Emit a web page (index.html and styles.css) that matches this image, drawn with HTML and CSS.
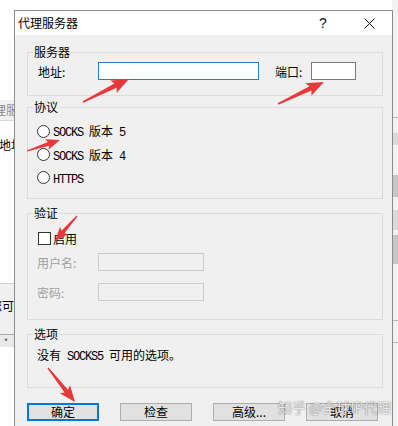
FILE: index.html
```html
<!DOCTYPE html>
<html lang="zh-CN">
<head>
    <meta charset="UTF-8">
    <meta name="viewport" content="width=device-width, initial-scale=1.0">
    <title>代理服务器</title>
    <link rel="stylesheet" href="styles.css">
</head>
<body>
    <!-- window behind the dialog -->
    <div class="bg-left">
        <div class="bg-gap-1"></div>
        <div class="bg-bar">理服</div>
        <div class="bg-text">地址</div>
        <div class="bg-gap-2"></div>
        <div class="bg-panel">您可</div>
        <div class="bg-strip">···</div>
    </div>
    <div class="bg-right">
        <div class="r-gap" style="height:117px"></div>
        <div class="r-line"></div>
        <div class="r-gap" style="height:15px"></div>
        <div class="r-block light" style="height:12px"></div>
        <div class="r-gap" style="height:30px"></div>
        <div class="r-block" style="height:22px"></div>
        <div class="r-gap" style="height:13px"></div>
        <div class="r-block light" style="height:20px"></div>
        <div class="r-gap" style="height:5px"></div>
        <div class="r-block" style="height:29px"></div>
        <div class="r-gap" style="height:56px"></div>
        <div class="r-line"></div>
        <div class="r-gap" style="height:21px"></div>
        <div class="r-line"></div>
    </div>

    <div class="dialog">
        <div class="titlebar">
            <span class="title">代理服务器</span>
            <span class="tb-btn help">?</span>
            <span class="tb-btn close">
                <svg width="11" height="11" viewBox="0 0 11 11"><path d="M0.5 0.5 L10.5 10.5 M10.5 0.5 L0.5 10.5" stroke="#111" stroke-width="1"/></svg>
            </span>
        </div>
        <div class="dlg-body">
            <fieldset class="group g-server">
                <legend>服务器</legend>
                <div class="row">
                    <span class="lbl">地址:</span>
                    <input class="field addr" type="text">
                    <span class="lbl port-lbl">端口:</span>
                    <input class="field port" type="text">
                </div>
            </fieldset>

            <fieldset class="group g-proto">
                <legend>协议</legend>
                <div class="opt"><span class="radio"></span><span class="opt-text"><span class="lat">SOCKS </span>版本<span class="lat"> 5</span></span></div>
                <div class="opt o2"><span class="radio"></span><span class="opt-text"><span class="lat">SOCKS </span>版本<span class="lat"> 4</span></span></div>
                <div class="opt o3"><span class="radio"></span><span class="opt-text"><span class="lat">HTTPS</span></span></div>
            </fieldset>

            <fieldset class="group g-auth">
                <legend>验证</legend>
                <div class="check-row"><span class="check"></span><span class="check-text">启用</span></div>
                <div class="row user-row">
                    <span class="lbl off">用户名:</span>
                    <input class="field off-field" type="text" disabled>
                </div>
                <div class="row pass-row">
                    <span class="lbl off">密码:</span>
                    <input class="field off-field" type="password" disabled>
                </div>
            </fieldset>

            <fieldset class="group g-opts">
                <legend>选项</legend>
                <div class="note">没有<span class="lat"> SOCKS5 </span>可用的选项。</div>
            </fieldset>

            <div class="buttons">
                <button class="btn default">确定</button>
                <button class="btn">检查</button>
                <button class="btn">高级...</button>
                <button class="btn">取消</button>
            </div>
        </div>
    </div>

    <!-- red annotation arrows -->
    <svg class="marks" width="398" height="426" viewBox="0 0 398 426">
        <g fill="#e8393a">
            <polygon transform="translate(83 102) rotate(-26.6)" points="0,-0.8 36.4,-2.4 34,-7 51.4,0 34,7 36.4,2.4 0,0.8"/>
            <polygon transform="translate(278 104) rotate(-25.6)" points="0,-0.8 36,-2.4 33.6,-7 51,0 33.6,7 36,2.4 0,0.8"/>
            <polygon transform="translate(27 151) rotate(-18.4)" points="0,-0.6 22.8,-2 20.8,-5.5 34.8,0 20.8,5.5 22.8,2 0,0.6"/>
            <polygon transform="translate(77 216) rotate(131.3)" points="0,-0.6 21.3,-2 19.3,-5.5 33.3,0 19.3,5.5 21.3,2 0,0.6"/>
            <polygon transform="translate(48 368) rotate(51.5)" points="0,-0.7 29.4,-2.2 27.2,-6.5 43.4,0 27.2,6.5 29.4,2.2 0,0.7"/>
        </g>
    </svg>

    <div class="watermark">知乎 @全球IP代理</div>
</body>
</html>
```

FILE: styles.css
```css
body {
    margin: 0;
    width: 398px;
    height: 426px;
    overflow: hidden;
    position: relative;
    background-color: #ffffff;
    font-family: "Noto Sans CJK SC", sans-serif;
    font-size: 12px;
    color: #000000;
}
/* Background window */
.bg-left {
    position: absolute;
    left: 0;
    top: 0;
    width: 14px;
    height: 426px;
    overflow: hidden;
    white-space: nowrap;
}
.bg-gap-1 {
    height: 100px;
}
.bg-bar {
    height: 20px;
    line-height: 20px;
    background-color: #f0f0f0;
    border-bottom: 1px solid #d9d9d9;
    color: #8a8a8a;
    text-indent: -6px;
}
.bg-text {
    margin-top: 16px;
    line-height: 16px;
    text-indent: -1px;
}
.bg-gap-2 {
    height: 130px;
}
.bg-panel {
    height: 50px;
    line-height: 44px;
    background-color: #f0f0f0;
    border-top: 1px solid #d0d0d0;
    border-bottom: 1px solid #a8a8a8;
    text-indent: -10px;
}
.bg-strip {
    height: 12px;
    line-height: 10px;
    background-color: #e9e9e9;
    color: #777777;
}
.bg-right {
    position: absolute;
    right: 0;
    top: 0;
    width: 6px;
    height: 426px;
    background-color: #f2f2f2;
}
.r-line {
    height: 1px;
    background-color: #b8b8b8;
}
.r-block {
    background-color: #c6c6c6;
}
.r-block.light {
    background-color: #dadada;
}

/* Dialog */
.dialog {
    position: absolute;
    left: 14px;
    top: 10px;
    width: 377px;
    height: 430px;
    border: 1px solid #8c8c8c;
    background-color: #f0f0f0;
}
.titlebar {
    display: flex;
    align-items: center;
    height: 24px;
    background-color: #ffffff;
    padding-left: 3px;
}
.title {
    flex: 1;
    line-height: 16px;
}
.tb-btn {
    width: 46px;
    height: 24px;
    display: flex;
    align-items: center;
    justify-content: center;
}
.help {
    font-family: "Liberation Sans", sans-serif;
    font-size: 14px;
    color: #111111;
}
.dlg-body {
    padding: 10px 9px 0 12px;
}
.group {
    margin: 0;
    padding: 3px 10px 15px 10px;
    border: 1px solid #dcdcdc;
    min-width: 0;
}
.group legend {
    padding: 0 1px;
    margin-left: -5px;
    line-height: 14px;
    font-size: 12px;
}
.row {
    display: flex;
    align-items: center;
    height: 18px;
}
.lbl {
    width: 60px;
    flex-shrink: 0;
}
.port-lbl {
    width: 36px;
    margin-left: 16px;
}
.field {
    box-sizing: border-box;
    height: 18px;
    margin: 0;
    padding: 0 2px;
    background-color: #ffffff;
    border: 1px solid #7a7a7a;
    outline: none;
}
.addr {
    width: 161px;
    border-color: #2f7bbd;
}
.port {
    width: 45px;
}

/* Protocol */
.g-proto {
    margin-top: 4px;
    padding-top: 5px;
    padding-bottom: 9px;
}
.opt {
    display: flex;
    align-items: center;
    height: 24px;
}
.opt.o2,
.opt.o3 {
    height: 23px;
}
.radio {
    box-sizing: border-box;
    width: 13px;
    height: 13px;
    margin-left: -1px;
    border: 1px solid #333333;
    border-radius: 50%;
    background-color: #ffffff;
}
.opt-text {
    margin-left: 3px;
}
.lat {
    font-family: "Liberation Mono", monospace;
    font-size: 12px;
    letter-spacing: -1.2px;
    white-space: pre;
}

/* Auth */
.g-auth {
    margin-top: 7px;
    padding-top: 8px;
    padding-bottom: 18px;
}
.check-row {
    display: flex;
    align-items: center;
    height: 20px;
}
.check {
    box-sizing: border-box;
    width: 13px;
    height: 13px;
    border: 1px solid #333333;
    background-color: #ffffff;
}
.check-text {
    margin-left: 2px;
}
.user-row {
    margin-top: 5px;
}
.pass-row {
    margin-top: 12px;
}
.lbl.off {
    color: #a0a0a0;
    margin-left: -1px;
    width: 61px;
}
.off-field {
    width: 106px;
    background-color: #f0f0f0;
    border-color: #cccccc;
}

/* Options */
.g-opts {
    margin-top: 7px;
    padding-top: 6px;
    padding-bottom: 22px;
}
.note {
    line-height: 16px;
    margin-left: -1px;
}

/* Buttons */
.buttons {
    display: flex;
    gap: 21px;
    margin-top: 15px;
}
.btn {
    width: 72px;
    height: 18px;
    padding: 0;
    font-family: "Noto Sans CJK SC", sans-serif;
    font-size: 12px;
    line-height: 16px;
    color: #000000;
    background-color: #e1e1e1;
    border: 1px solid #adadad;
}
.btn.default {
    border-color: #0078d7;
    box-shadow: inset 0 0 0 1px #0078d7;
}

/* Overlays */
.marks {
    position: absolute;
    left: 0;
    top: 0;
}
.watermark {
    position: absolute;
    left: 278px;
    top: 398px;
    font-size: 14px;
    line-height: 18px;
    white-space: nowrap;
    color: rgba(255, 255, 255, 0.85);
    text-shadow: 0 0 1px rgba(60, 60, 60, 0.7), 0 0 2px rgba(0, 0, 0, 0.25);
}
```
